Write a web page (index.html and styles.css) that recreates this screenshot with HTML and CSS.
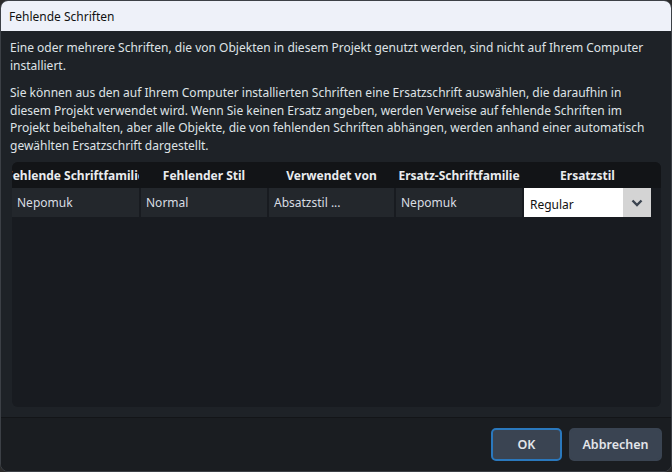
FILE: index.html
```html
<!DOCTYPE html>
<html lang="de">
 <head>
   <meta charset="UTF-8">
   <meta name="viewport" content="width=device-width, initial-scale=1.0">
   <title>Fehlende Schriften</title>
   <link rel="stylesheet" href="styles.css">
 </head>
 <body>
  <div class="window">
    <div class="title-bar">Fehlende Schriften</div>

    <div class="content">
      <p class="info">Eine oder mehrere Schriften, die von Objekten in diesem Projekt genutzt werden, sind nicht auf Ihrem Computer installiert.</p>
      <p class="info">Sie können aus den auf Ihrem Computer installierten Schriften eine Ersatzschrift auswählen, die daraufhin in diesem Projekt verwendet wird. Wenn Sie keinen Ersatz angeben, werden Verweise auf fehlende Schriften im Projekt beibehalten, aber alle Objekte, die von fehlenden Schriften abhängen, werden anhand einer automatisch gewählten Ersatzschrift dargestellt.</p>

      <div class="font-table">
        <div class="table-row table-head">
          <div class="head-cell"><span>Fehlende Schriftfamilie</span></div>
          <div class="head-cell"><span>Fehlender Stil</span></div>
          <div class="head-cell"><span>Verwendet von</span></div>
          <div class="head-cell"><span>Ersatz-Schriftfamilie</span></div>
          <div class="head-cell"><span>Ersatzstil</span></div>
        </div>
        <div class="table-row">
          <div class="cell">Nepomuk</div>
          <div class="cell">Normal</div>
          <div class="cell">Absatzstil ...</div>
          <div class="cell">Nepomuk</div>
          <div class="style-select">
            <span class="select-value">Regular</span>
            <span class="select-arrow">
              <svg width="12" height="8" viewBox="0 0 12 8"><path d="M1.5 1.5 L6 6 L10.5 1.5" fill="none" stroke="#3b4450" stroke-width="2.4"/></svg>
            </span>
          </div>
        </div>
      </div>
    </div>

    <div class="footer">
      <button class="dialog-button default-button">OK</button>
      <button class="dialog-button">Abbrechen</button>
    </div>
  </div>
 </body>
</html>
```

FILE: styles.css
```css
  body {
      margin: 0;
      padding: 0;
      background-color: #2b2b2b;
      font-family: "Noto Sans", "Open Sans", sans-serif;
      font-size: 12px;
  }

  /* The dialog window */
  .window {
      height: 472px;
      box-sizing: border-box;
      display: flex;
      flex-direction: column;
      background-color: #1e2227;
      border: 1px solid #3c4046;
      border-radius: 8px;
      overflow: hidden;
  }

  .title-bar {
      height: 30px;
      flex-shrink: 0;
      display: flex;
      align-items: center;
      padding-left: 8px;
      background-color: #eef1f9;
      color: #111111;
  }

  .content {
      flex: 1;
      display: flex;
      flex-direction: column;
      padding: 8px 10px 10px 9px;
  }

  .info {
      margin: 0 0 10px 0;
      line-height: 17.5px;
      color: #dfe2e6;
  }

  .info + .info {
      margin-bottom: 8px;
  }

  /* Table with the missing fonts */
  .font-table {
      flex: 1;
      margin-left: 2px;
      background-color: #181b20;
      border-radius: 6px;
      overflow: hidden;
  }

  .table-row {
      display: flex;
      gap: 2px;
      height: 29px;
  }

  .table-head {
      height: 26px;
      background-color: #121417;
  }

  .head-cell {
      width: 127px;
      flex-shrink: 0;
      display: flex;
      justify-content: center;
      align-items: center;
      overflow: hidden;
      font-weight: bold;
      color: #e9ebee;
  }

  .head-cell:nth-child(2) { width: 126px; }
  .head-cell:nth-child(3) { width: 125px; }
  .head-cell:nth-child(4) { width: 126px; }

  .head-cell span {
      white-space: nowrap;
  }

  .cell {
      width: 122px;
      flex-shrink: 0;
      display: flex;
      align-items: center;
      padding-left: 5px;
      background-color: #23272c;
      color: #d9dde3;
  }

  .cell:nth-child(2) { width: 121px; }
  .cell:nth-child(3) { width: 120px; }
  .cell:nth-child(4) { width: 121px; }

  .style-select {
      width: 127px;
      display: flex;
      background-color: #ffffff;
      color: #111111;
  }

  .select-value {
      flex: 1;
      display: flex;
      align-items: center;
      padding: 3px 0 0 6px;
  }

  .select-arrow {
      width: 28px;
      display: flex;
      justify-content: center;
      align-items: center;
      background-color: #d4d4d4;
  }

  .footer {
      height: 54px;
      flex-shrink: 0;
      display: flex;
      justify-content: flex-end;
      align-items: flex-start;
      gap: 7px;
      padding: 10px 9px 0 0;
      box-sizing: border-box;
      background-color: #1a1d21;
      border-top: 1px solid #131518;
  }

  .dialog-button {
      height: 33px;
      padding: 0;
      font-family: "Noto Sans", "Open Sans", sans-serif;
      font-size: 12.5px;
      font-weight: 600;
      color: #e3e6ea;
      background-color: #3a4452;
      border: 2px solid #3a4452;
      border-radius: 5px;
  }

  .default-button {
      width: 71px;
      border-color: #2a78bd;
  }

  .dialog-button:last-child {
      width: 93px;
  }
```
